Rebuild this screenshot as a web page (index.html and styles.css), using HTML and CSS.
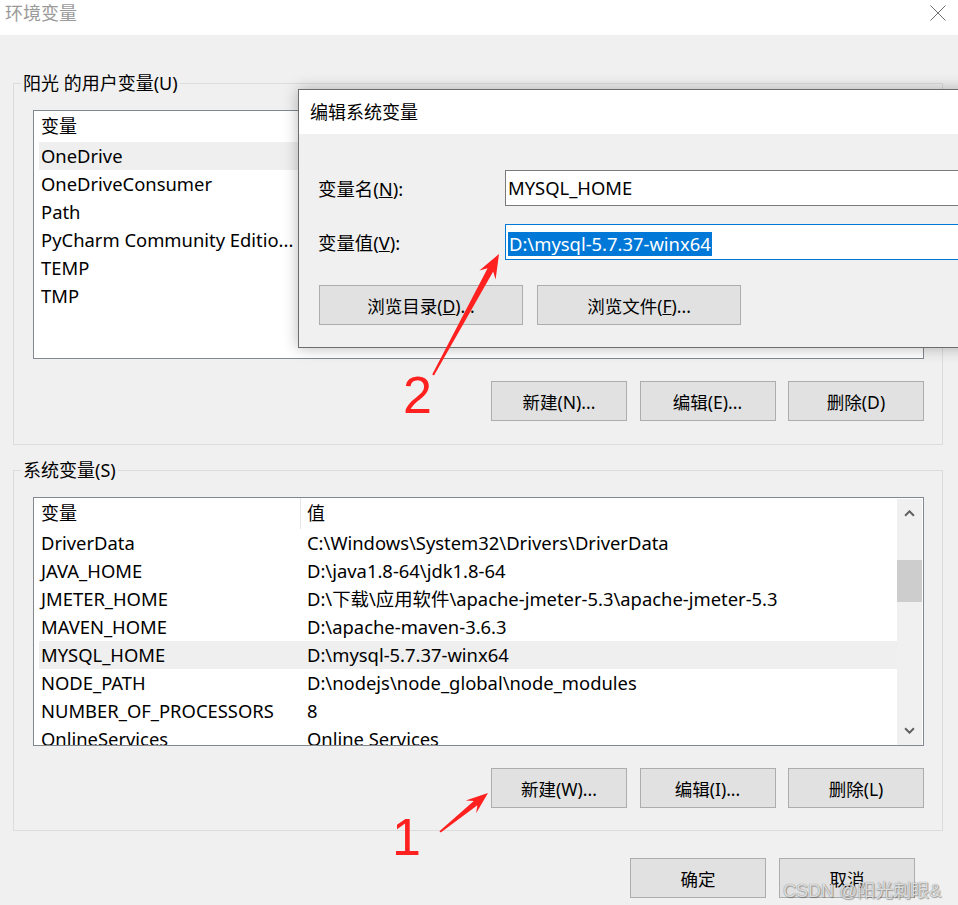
FILE: index.html
```html
<!DOCTYPE html>
<html lang="zh-CN">
  <head>
    <meta charset="UTF-8" />
    <title>环境变量</title>
    <link rel="stylesheet" href="styles.css">
  </head>
  <body>
    <div class="window">
      <div class="titlebar">
        <span class="title">环境变量</span>
        <svg class="close" viewBox="0 0 16 16">
          <path d="M0.5 0.5 L15.5 15.5 M15.5 0.5 L0.5 15.5" stroke="#6e6e6e" stroke-width="1" fill="none" />
        </svg>
      </div>

      <div class="main">
        <fieldset class="group group-user">
          <legend>阳光 的用户变量(U)</legend>
          <div class="list">
            <div class="list-body">
              <div class="row head"><span class="cell-name">变量</span><span class="cell-value"></span></div>
              <div class="row active"><span class="cell-name">OneDrive</span><span class="cell-value"></span></div>
              <div class="row"><span class="cell-name">OneDriveConsumer</span><span class="cell-value"></span></div>
              <div class="row"><span class="cell-name">Path</span><span class="cell-value"></span></div>
              <div class="row"><span class="cell-name">PyCharm Community Editio...</span><span class="cell-value"></span></div>
              <div class="row"><span class="cell-name">TEMP</span><span class="cell-value"></span></div>
              <div class="row"><span class="cell-name">TMP</span><span class="cell-value"></span></div>
            </div>
          </div>
          <div class="btn-row">
            <button class="btn">新建(N)...</button>
            <button class="btn">编辑(E)...</button>
            <button class="btn">删除(D)</button>
          </div>
        </fieldset>

        <fieldset class="group group-sys">
          <legend>系统变量(S)</legend>
          <div class="list">
            <div class="list-body">
              <div class="row head"><span class="cell-name">变量</span><span class="cell-value">值</span></div>
              <div class="row"><span class="cell-name">DriverData</span><span class="cell-value">C:\Windows\System32\Drivers\DriverData</span></div>
              <div class="row"><span class="cell-name">JAVA_HOME</span><span class="cell-value">D:\java1.8-64\jdk1.8-64</span></div>
              <div class="row"><span class="cell-name">JMETER_HOME</span><span class="cell-value">D:\下载\应用软件\apache-jmeter-5.3\apache-jmeter-5.3</span></div>
              <div class="row"><span class="cell-name">MAVEN_HOME</span><span class="cell-value">D:\apache-maven-3.6.3</span></div>
              <div class="row active"><span class="cell-name">MYSQL_HOME</span><span class="cell-value">D:\mysql-5.7.37-winx64</span></div>
              <div class="row"><span class="cell-name">NODE_PATH</span><span class="cell-value">D:\nodejs\node_global\node_modules</span></div>
              <div class="row"><span class="cell-name">NUMBER_OF_PROCESSORS</span><span class="cell-value">8</span></div>
              <div class="row"><span class="cell-name">OnlineServices</span><span class="cell-value">Online Services</span></div>
            </div>
            <div class="scrollbar">
              <div class="scroll-btn">
                <svg viewBox="0 0 10 6"><path d="M1 5 L5 1 L9 5" stroke="#606060" stroke-width="1.8" fill="none" /></svg>
              </div>
              <div class="scroll-track"><div class="scroll-thumb"></div></div>
              <div class="scroll-btn">
                <svg viewBox="0 0 10 6"><path d="M1 1 L5 5 L9 1" stroke="#606060" stroke-width="1.8" fill="none" /></svg>
              </div>
            </div>
          </div>
          <div class="btn-row">
            <button class="btn">新建(W)...</button>
            <button class="btn">编辑(I)...</button>
            <button class="btn">删除(L)</button>
          </div>
        </fieldset>

        <div class="footer">
          <button class="btn">确定</button>
          <button class="btn">取消</button>
        </div>
      </div>

      <!-- 弹出的编辑窗口 -->
      <div class="edit-dialog">
        <div class="dialog-title">编辑系统变量</div>
        <div class="dialog-body">
          <div class="field">
            <label>变量名(<u>N</u>):</label>
            <div class="input">MYSQL_HOME</div>
          </div>
          <div class="field">
            <label>变量值(<u>V</u>):</label>
            <div class="input focus"><span class="selected">D:\mysql-5.7.37-winx64</span></div>
          </div>
          <div class="dialog-btns">
            <button class="btn btn-wide">浏览目录(<u>D</u>)...</button>
            <button class="btn btn-wide">浏览文件(<u>F</u>)...</button>
          </div>
        </div>
      </div>

      <!-- 标注 -->
      <svg class="marks" viewBox="0 0 958 905">
        <polygon points="432.2,374.5 487.6,268.2 479.4,270.6 499,254 495.6,279.6 493.2,271.4 434,375.5" fill="#ff2020" />
        <text x="403" y="413" class="mark-num">2</text>
        <polygon points="439.4,831.3 473.8,801 465.7,800.4 488,793 476.1,813.3 477.4,805.2 440.8,832.6" fill="#ff2020" />
        <text x="392" y="855" class="mark-num">1</text>
      </svg>

      <div class="watermark">CSDN @阳光刺眼&amp;</div>
    </div>
  </body>
</html>
```

FILE: styles.css
```css
* {
  box-sizing: border-box;
}
html,
body {
  margin: 0;
  padding: 0;
}

body {
  width: 958px;
  height: 905px;
  overflow: hidden;
  font-family: "Noto Sans", "Noto Sans CJK SC", sans-serif;
  font-size: 18.4px;
  color: #000;
  background: #f0f0f0;
}

.window {
  position: relative;
  width: 958px;
  height: 905px;
}

.titlebar {
  height: 35px;
  background: #fff;
  display: flex;
  justify-content: space-between;
  padding: 0 12px 0 5px;
}
.titlebar .title {
  color: #9a9a9a;
  font-size: 18px;
  line-height: 26px;
}
.close {
  width: 16px;
  height: 16px;
  margin-top: 5px;
}

.main {
  padding: 37px 0 0 13px;
}

.group {
  width: 930px;
  min-width: 0;
  margin: 0;
  border: 1px solid #dcdcdc;
  padding: 16px 18px 23px 19px;
}
.group legend {
  padding: 0 2px;
  margin-left: -12px;
  font-size: 18px;
  line-height: 22px;
}
.group-sys {
  margin-top: 14px;
  padding-bottom: 22px;
}

.list {
  height: 249px;
  border: 1px solid #828790;
  background: #fff;
  display: flex;
}
.list-body {
  flex: 1;
  padding-left: 5px;
  overflow: hidden;
}
.row {
  display: flex;
  height: 28px;
  line-height: 28px;
  white-space: nowrap;
}
.row.head {
  height: 31px;
  line-height: 31px;
  font-size: 18px;
}
.row.active {
  background: #efefef;
}
.cell-name {
  width: 262px;
  flex-shrink: 0;
  padding-left: 2px;
  overflow: hidden;
}
.row.head .cell-name {
  border-right: 1px solid #e5e5e5;
}
.cell-value {
  padding-left: 6px;
}

.scrollbar {
  width: 25px;
  margin: 1px 1px 0 0;
  background: #f0f0f0;
  display: flex;
  flex-direction: column;
}
.scroll-btn {
  height: 29px;
  display: flex;
  align-items: center;
  justify-content: center;
}
.scroll-btn svg {
  width: 11px;
  height: 7px;
}
.scroll-track {
  flex: 1;
}
.scroll-thumb {
  height: 42px;
  margin-top: 32px;
  background: #cdcdcd;
}

.btn {
  width: 136px;
  height: 40px;
  padding: 0;
  background: #e1e1e1;
  border: 1px solid #adadad;
  font-family: inherit;
  font-size: 17.5px;
  color: #000;
}
.btn-row {
  display: flex;
  justify-content: flex-end;
  gap: 12.5px;
  margin-top: 22px;
}

.footer {
  display: flex;
  justify-content: flex-end;
  gap: 13px;
  padding-right: 43px;
  margin-top: 27px;
}

.edit-dialog {
  position: absolute;
  left: 298px;
  top: 89px;
  width: 700px;
  height: 259px;
  border: 1px solid #6d6d6d;
  background: #f0f0f0;
  box-shadow: 0 0 14px rgba(0, 0, 0, 0.28);
}
.dialog-title {
  height: 44px;
  line-height: 44px;
  padding-left: 11px;
  background: #fff;
  font-size: 18px;
}
.dialog-body {
  padding: 36px 0 0 20px;
}
.field {
  display: flex;
  align-items: center;
  height: 36px;
}
.field + .field {
  margin-top: 18px;
}
.field label {
  width: 187px;
  margin-left: -1px;
}
.field .input {
  width: 480px;
  height: 36px;
  border: 1px solid #7a7a7a;
  background: #fff;
  padding-left: 2px;
  line-height: 34px;
}
.field .input.focus {
  border-color: #0078d7;
}
.selected {
  display: inline-block;
  line-height: 24px;
  padding: 0 1px;
  background: #0078d7;
  color: #fff;
  vertical-align: middle;
}
.dialog-btns {
  display: flex;
  gap: 14px;
  margin-top: 25px;
}
.btn-wide {
  width: 204px;
}

.marks {
  position: absolute;
  left: 0;
  top: 0;
  width: 958px;
  height: 905px;
  pointer-events: none;
}
.mark-num {
  font-family: "Liberation Sans", sans-serif;
  font-size: 52px;
  fill: #ff2020;
}

.watermark {
  position: absolute;
  left: 783px;
  top: 876px;
  font-family: "Liberation Sans", "Noto Sans CJK SC", sans-serif;
  font-size: 18px;
  color: rgba(255, 255, 255, 0.75);
  text-shadow: 0 0 1px #6a6a6a, 1px 1px 1px rgba(0, 0, 0, 0.3);
}
```
